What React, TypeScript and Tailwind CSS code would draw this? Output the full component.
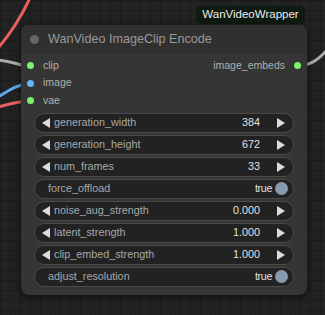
const FONT = { fontFamily: '"Liberation Sans", Arial, sans-serif' };

type Widget =
  | { kind: 'number'; name: string; value: string }
  | { kind: 'toggle'; name: string; value: string };

const WIDGETS: Widget[] = [
  { kind: 'number', name: 'generation_width', value: '384' },
  { kind: 'number', name: 'generation_height', value: '672' },
  { kind: 'number', name: 'num_frames', value: '33' },
  { kind: 'toggle', name: 'force_offload', value: 'true' },
  { kind: 'number', name: 'noise_aug_strength', value: '0.000' },
  { kind: 'number', name: 'latent_strength', value: '1.000' },
  { kind: 'number', name: 'clip_embed_strength', value: '1.000' },
  { kind: 'toggle', name: 'adjust_resolution', value: 'true' },
];

const INPUTS = [
  { name: 'clip', color: 'bg-[#7af06e]' },
  { name: 'image', color: 'bg-[#64b5f6]' },
  { name: 'vae', color: 'bg-[#7af06e]' },
];

function Arrow({ dir }: { dir: 'left' | 'right' }) {
  return (
    <svg width="8" height="10" viewBox="0 0 8 10" className="shrink-0">
      {dir === 'left' ? <polygon points="8,0 8,10 0,5" fill="#ddd" /> : <polygon points="0,0 0,10 8,5" fill="#ddd" />}
    </svg>
  );
}

function WidgetRow({ w }: { w: Widget }) {
  if (w.kind === 'toggle') {
    return (
      <div className="flex h-[20px] items-center rounded-full border border-[#4a4a4a] bg-[#222] pl-[13px] pr-[5px] text-[10.8px]">
        <span className="text-[#a8a8a8]">{w.name}</span>
        <span className="ml-auto text-[#e0e0e0] tracking-[-0.4px]">{w.value}</span>
        <span className="ml-[3px] h-[13px] w-[13px] rounded-full bg-[#8a9bb0]" />
      </div>
    );
  }
  return (
    <div className="flex h-[20px] items-center rounded-full border border-[#4a4a4a] bg-[#222] pl-[7px] pr-[8px] text-[10.8px]">
      <Arrow dir="left" />
      <span className="ml-[4px] text-[#a8a8a8]">{w.name}</span>
      <span className="ml-auto mr-[17px] text-[#e0e0e0]">{w.value}</span>
      <Arrow dir="right" />
    </div>
  );
}

export default function App() {
  return (
    <div
      className="relative h-[315px] w-[325px] overflow-hidden bg-[#222] bg-[linear-gradient(#1b1b1b_1px,transparent_1px),linear-gradient(90deg,#1b1b1b_1px,transparent_1px)] bg-[size:10px_10px]"
      style={FONT}
    >
      {/* 連線 */}
      <svg width="325" height="315" className="absolute inset-0">
        <path d="M30,-2 C22,15 12,32 -2,48" stroke="#e86060" strokeWidth="3" fill="none" />
        <path d="M-2,60 C12,61 18,65 28,66" stroke="#aaa" strokeWidth="3" fill="none" />
        <path d="M-2,97 C10,90 16,85 28,84" stroke="#59a8ee" strokeWidth="3" fill="none" />
        <path d="M-2,107 C10,104 16,102 28,101" stroke="#e86060" strokeWidth="3" fill="none" />
        <path d="M300,66 C312,64 318,60 327,50" stroke="#aaa" strokeWidth="3" fill="none" />
      </svg>

      {/* 群組標籤 */}
      <div className="absolute left-[196px] top-[6px] flex h-[18px] w-[109px] items-center justify-center rounded-[5px] bg-[#0f1a10] text-[11.5px] text-[#ececec]">
        WanVideoWrapper
      </div>

      {/* 節點 */}
      <div className="absolute left-[21px] top-[25px] w-[286px] rounded-[8px] bg-[#353535] shadow-[0_2px_6px_rgba(0,0,0,0.6)]">
        <div className="flex h-[29px] items-center rounded-t-[8px] border-b border-[#2e2e2e] bg-[#303030] pl-[9px]">
          <span className="h-[9px] w-[9px] rounded-full bg-[#666]" />
          <span className="ml-[9px] text-[12.6px] text-[#999]">WanVideo ImageClip Encode</span>
        </div>

        <div className="relative pt-[3px]">
          {INPUTS.map((s) => (
            <div key={s.name} className="flex h-[17.5px] items-center pl-[6px] text-[10.5px] text-[#b0b0b0]">
              <span className={`h-[7px] w-[7px] rounded-full ${s.color}`} />
              <span className="ml-[9px]">{s.name}</span>
            </div>
          ))}
          <div className="absolute right-[6px] top-[3px] flex h-[17.5px] items-center text-[10.5px] text-[#b0b0b0]">
            <span>image_embeds</span>
            <span className="ml-[9px] h-[7px] w-[7px] rounded-full bg-[#7af06e]" />
          </div>
        </div>

        <div className="flex flex-col gap-[2px] px-[13px] pb-[8px] pt-[3px]">
          {WIDGETS.map((w) => (
            <WidgetRow key={w.name} w={w} />
          ))}
        </div>
      </div>
    </div>
  );
}
